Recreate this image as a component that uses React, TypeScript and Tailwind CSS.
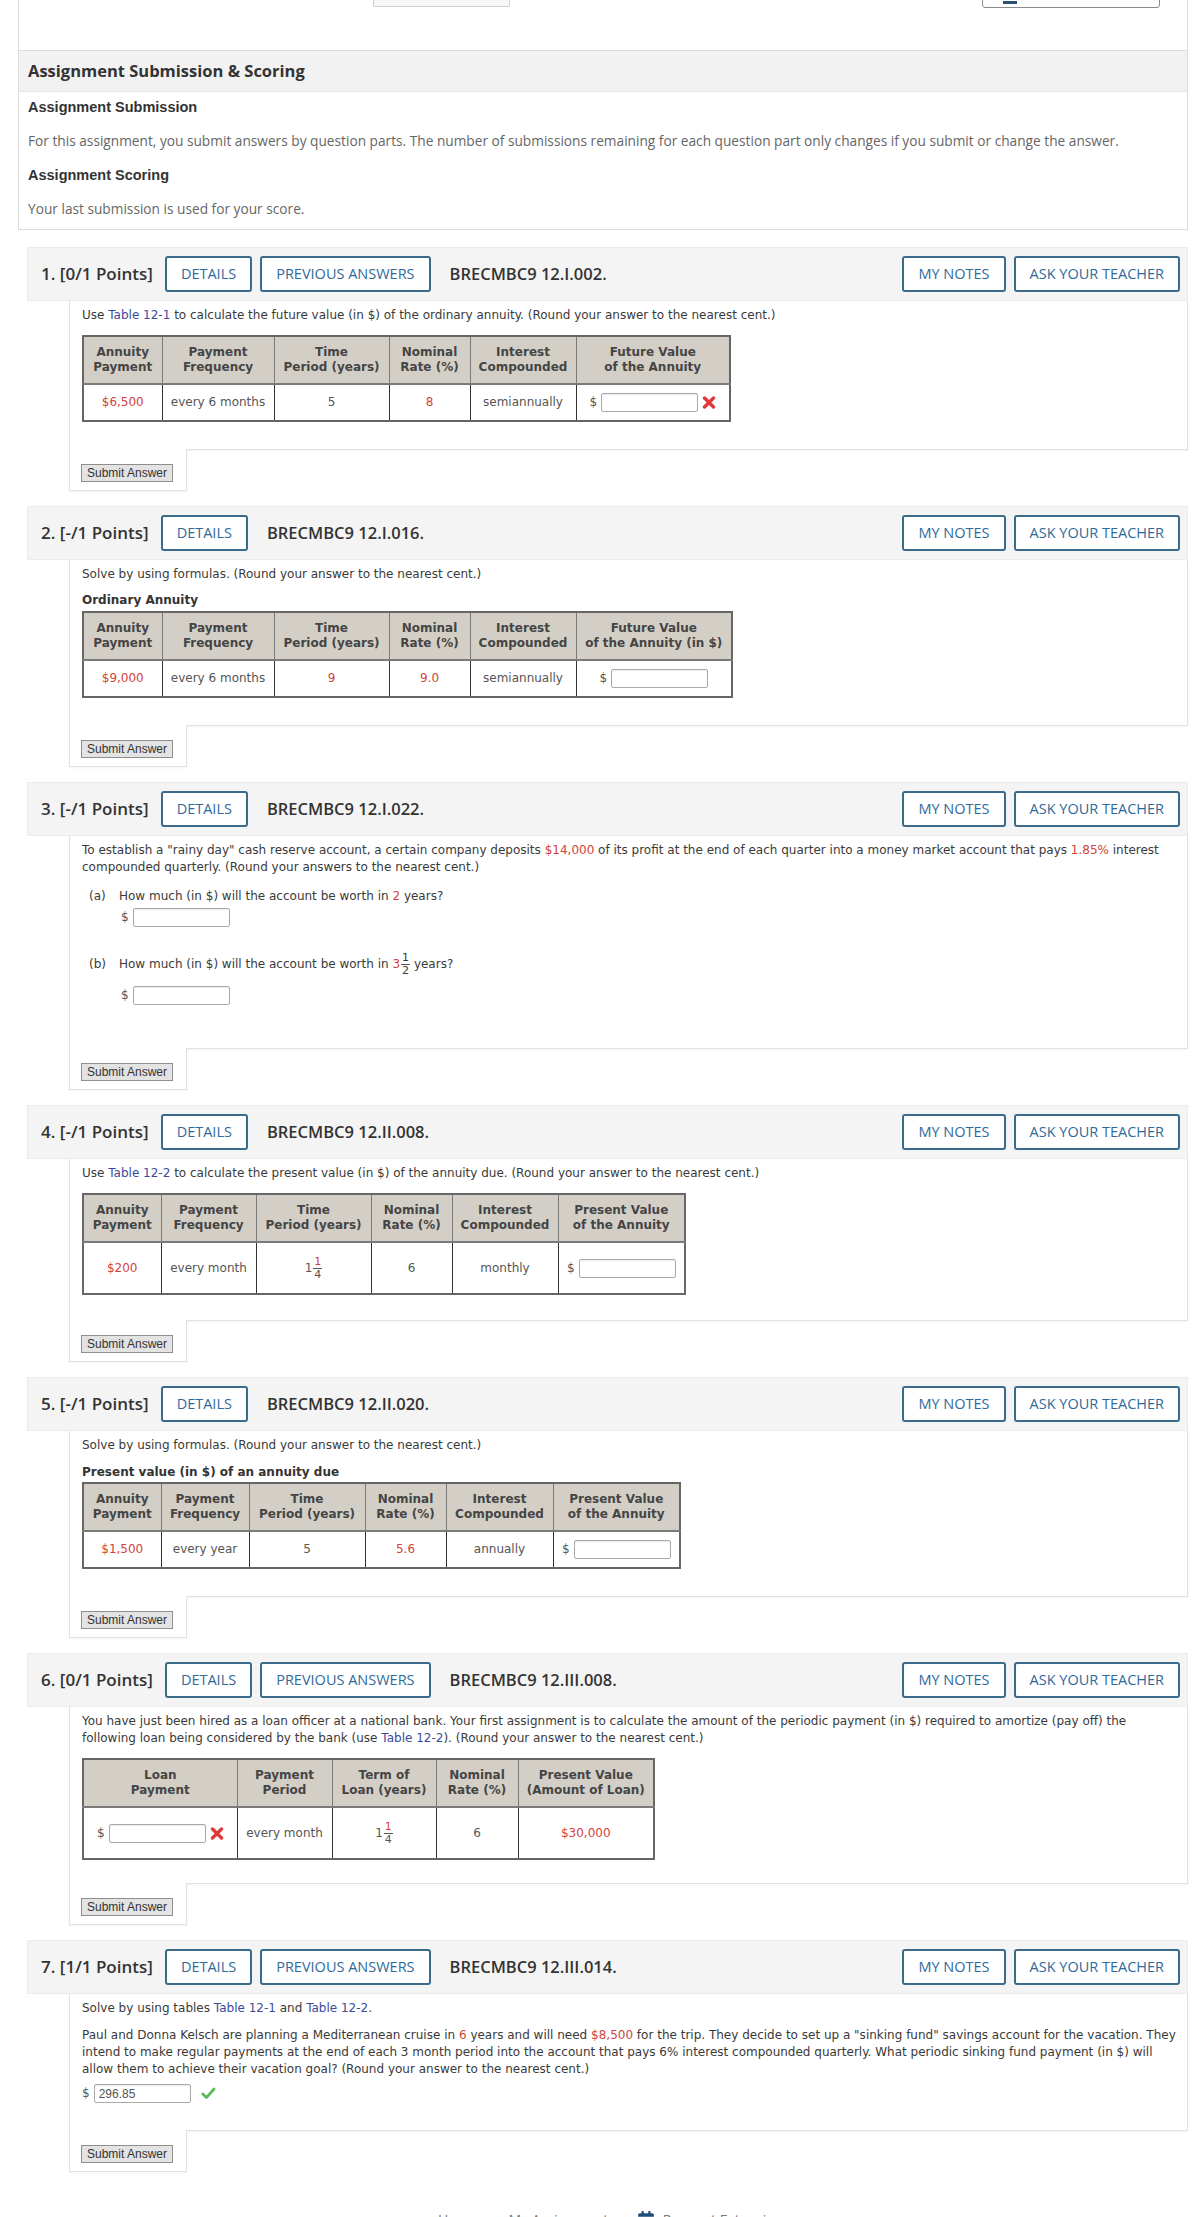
import React from 'react'
import { FaCalendarAlt } from 'react-icons/fa'

type Head = { top: string; bottom: string; w: string }

const annuityHeads = (last: Head): Head[] => [
    { top: 'Annuity', bottom: 'Payment', w: 'w-[79px]' },
    { top: 'Payment', bottom: 'Frequency', w: 'w-[112px]' },
    { top: 'Time', bottom: 'Period (years)', w: 'w-[115px]' },
    { top: 'Nominal', bottom: 'Rate (%)', w: 'w-[81px]' },
    { top: 'Interest', bottom: 'Compounded', w: 'w-[106px]' },
    last,
]

function Red({ children }: { children: React.ReactNode }) {
    return <span className="text-[#d2433b]">{children}</span>
}

function TableLink({ children }: { children: React.ReactNode }) {
    return <span className="text-[#3b4a9c]">{children}</span>
}

function Btn({ children }: { children: React.ReactNode }) {
    return (
        <span className="flex h-[36px] items-center rounded-[3px] border-2 border-[#3b6b8b] bg-white px-[14px] text-[14.5px] leading-none text-[#2f6a9b]">
            {children}
        </span>
    )
}

function XMark() {
    return (
        <svg width="14" height="13" viewBox="0 0 14 13" className="inline-block align-middle">
            <path d="M2.5 2 L11.5 11 M11.5 2 L2.5 11" stroke="#e0393a" strokeWidth="3.4" strokeLinecap="round" />
        </svg>
    )
}

function Check() {
    return (
        <svg width="15" height="13" viewBox="0 0 15 13" className="inline-block align-middle">
            <path d="M1.8 7 L5.4 10.6 L13 2" stroke="#5cb85c" strokeWidth="2.8" fill="none" strokeLinecap="round" strokeLinejoin="round" />
        </svg>
    )
}

function Input({ value }: { value?: string }) {
    return (
        <input
            readOnly
            value={value ?? ''}
            className="h-[19px] w-[97px] rounded-[2px] border border-[#a9a9a9] bg-white px-[4px] align-middle font-['Liberation_Sans',sans-serif] text-[12px] text-[#555] shadow-[inset_0_1px_1px_rgba(0,0,0,0.08)]"
        />
    )
}

function Money({ wrong, check, value }: { wrong?: boolean; check?: boolean; value?: string }) {
    return (
        <span className="inline-flex items-center gap-[4px] text-[#555]">
            <span>$</span>
            <Input value={value} />
            {wrong && <XMark />}
            {check && <span className="ml-[6px]"><Check /></span>}
        </span>
    )
}

function Frac({ whole, num, den, wholeRed, numRed }: { whole: string; num: string; den: string; wholeRed?: boolean; numRed?: boolean }) {
    return (
        <span className="inline-flex items-center align-middle">
            <span className={wholeRed ? 'text-[#d2433b]' : ''}>{whole}</span>
            <span className="ml-[1px] inline-flex flex-col items-stretch text-center text-[11px] leading-[12px]">
                <span className={numRed ? 'px-[1px] text-[#d2433b]' : 'px-[1px]'}>{num}</span>
                <span className="border-t border-[#555] px-[1px]">{den}</span>
            </span>
        </span>
    )
}

function DataTable({ heads, cells, tall }: { heads: Head[]; cells: React.ReactNode[]; tall?: boolean }) {
    return (
        <table className="border-collapse border-2 border-[#666] text-center">
            <thead>
                <tr>
                    {heads.map((h) => (
                        <th
                            key={h.top + h.bottom}
                            className={`${h.w} h-[48px] border border-b-2 border-[#7a7a7a] bg-[#d3cfc6] px-[2px] font-bold leading-[15px] text-[#454545]`}
                        >
                            {h.top}
                            <br />
                            {h.bottom}
                        </th>
                    ))}
                </tr>
            </thead>
            <tbody>
                <tr>
                    {cells.map((c, i) => (
                        <td key={i} className={`${tall ? 'h-[52px]' : 'h-[37px]'} border border-[#333] px-[4px] text-[#555]`}>
                            {c}
                        </td>
                    ))}
                </tr>
            </tbody>
        </table>
    )
}

function Question({
    n,
    pts,
    prev,
    code,
    pb,
    children,
}: {
    n: number
    pts: string
    prev?: boolean
    code: string
    pb: string
    children: React.ReactNode
}) {
    return (
        <section className="mt-[15px]">
            {/* header bar */}
            <div className="flex h-[54px] items-center border border-[#ebebeb] bg-[#f4f4f4] pl-[13px] pr-[7px] font-['Open_Sans',sans-serif]">
                <span className="text-[17px] font-semibold text-[#333]">
                    {n}. [{pts} Points]
                </span>
                <div className="ml-[12px] flex gap-[8px]">
                    <Btn>DETAILS</Btn>
                    {prev && <Btn>PREVIOUS ANSWERS</Btn>}
                </div>
                <span className="ml-[19px] text-[16.5px] font-semibold text-[#333]">{code}</span>
                <div className="ml-auto flex gap-[8px]">
                    <Btn>MY NOTES</Btn>
                    <Btn>ASK YOUR TEACHER</Btn>
                </div>
            </div>

            {/* question body */}
            <div
                className={`${pb} ml-[42px] border-x border-b border-[#e1e1e1] bg-white pl-[12px] pr-[8px] pt-[6px] font-['DejaVu_Sans',sans-serif] text-[12px] leading-[17px] text-[#3a3a3a] shadow-[0_1px_2px_rgba(0,0,0,0.05)]`}
            >
                {children}
            </div>

            {/* submit tab */}
            <div className="relative -mt-px ml-[42px] w-[118px] border-x border-b border-[#e1e1e1] bg-white pb-[7px] pl-[11px] pt-[10px] shadow-[0_1px_2px_rgba(0,0,0,0.05)]">
                <button className="h-[18px] border border-[#8e8e8e] bg-[#e3e3e3] px-[5px] font-['Liberation_Sans',sans-serif] text-[12px] leading-none text-[#333]">
                    Submit Answer
                </button>
            </div>
        </section>
    )
}

export default function App() {
    return (
        <div className="min-h-screen bg-white pl-[18px] pr-[5px]">
            {/* top of page, cut off */}
            <div className="flex h-[50px] overflow-hidden border-x border-[#dcdcdc]">
                <div className="-mt-[30px] ml-[354px] h-[37px] w-[137px] rounded-[2px] border border-[#d0d0d0] bg-[#f7f7f7]" />
                <div className="-mt-[30px] ml-auto mr-[27px] flex h-[38px] w-[178px] items-end rounded-[3px] border border-[#8a8a8a] px-[20px] pb-[3px]">
                    <span className="h-[3px] w-[14px] bg-[#2d4f73]" />
                </div>
            </div>

            {/* Assignment Submission & Scoring */}
            <div className="border border-[#dcdcdc]">
                <div className="flex h-[41px] items-center border-b border-[#e6e6e6] bg-[#f2f2f2] pl-[9px] font-['Open_Sans',sans-serif] text-[16.5px] font-bold text-[#333]">
                    Assignment Submission &amp; Scoring
                </div>
                <div className="px-[9px] pb-[11px] pt-[6px]">
                    <h3 className="font-['Liberation_Sans',sans-serif] text-[14.5px] font-bold leading-[18px] text-[#333]">Assignment Submission</h3>
                    <p className="mt-[16px] font-['Open_Sans',sans-serif] text-[13.7px] leading-[18px] text-[#666]">
                        For this assignment, you submit answers by question parts. The number of submissions remaining for each question part only changes if you submit or change the answer.
                    </p>
                    <h3 className="mt-[16px] font-['Liberation_Sans',sans-serif] text-[14.5px] font-bold leading-[18px] text-[#333]">Assignment Scoring</h3>
                    <p className="mt-[16px] font-['Open_Sans',sans-serif] text-[13.7px] leading-[18px] text-[#666]">Your last submission is used for your score.</p>
                </div>
            </div>

            <div className="pl-[9px] pt-[2px]">
                <Question n={1} pts="0/1" prev code="BRECMBC9 12.I.002." pb="pb-[27px]">
                    <p>
                        Use <TableLink>Table 12-1</TableLink> to calculate the future value (in $) of the ordinary annuity. (Round your answer to the nearest cent.)
                    </p>
                    <div className="mt-[11px]">
                        <DataTable
                            heads={annuityHeads({ top: 'Future Value', bottom: 'of the Annuity', w: 'w-[154px]' })}
                            cells={[<Red>$6,500</Red>, 'every 6 months', '5', <Red>8</Red>, 'semiannually', <Money wrong />]}
                        />
                    </div>
                </Question>

                <Question n={2} pts="-/1" code="BRECMBC9 12.I.016." pb="pb-[27px]">
                    <p>Solve by using formulas. (Round your answer to the nearest cent.)</p>
                    <p className="mt-[9px] font-bold text-[#333]">Ordinary Annuity</p>
                    <div className="mt-[2px]">
                        <DataTable
                            heads={annuityHeads({ top: 'Future Value', bottom: 'of the Annuity (in $)', w: 'w-[156px]' })}
                            cells={[<Red>$9,000</Red>, 'every 6 months', <Red>9</Red>, <Red>9.0</Red>, 'semiannually', <Money />]}
                        />
                    </div>
                </Question>

                <Question n={3} pts="-/1" code="BRECMBC9 12.I.022." pb="pb-[43px]">
                    <p>
                        To establish a "rainy day" cash reserve account, a certain company deposits <Red>$14,000</Red> of its profit at the end of each quarter into a
                        money market account that pays <Red>1.85%</Red> interest compounded quarterly. (Round your answers to the nearest cent.)
                    </p>
                    <div className="mt-[12px] flex">
                        <span className="w-[37px] pl-[7px]">(a)</span>
                        <span>
                            How much (in $) will the account be worth in <Red>2</Red> years?
                        </span>
                    </div>
                    <div className="ml-[39px] mt-[3px]">
                        <Money />
                    </div>
                    <div className="mt-[23px] flex h-[28px] items-center">
                        <span className="w-[37px] pl-[7px]">(b)</span>
                        <span className="inline-flex items-center">
                            How much (in $) will the account be worth in&nbsp;
                            <Frac whole="3" num="1" den="2" wholeRed />
                            &nbsp;years?
                        </span>
                    </div>
                    <div className="ml-[39px] mt-[8px]">
                        <Money />
                    </div>
                </Question>

                <Question n={4} pts="-/1" code="BRECMBC9 12.II.008." pb="pb-[25px]">
                    <p>
                        Use <TableLink>Table 12-2</TableLink> to calculate the present value (in $) of the annuity due. (Round your answer to the nearest cent.)
                    </p>
                    <div className="mt-[11px]">
                        <DataTable
                            tall
                            heads={[
                                { top: 'Annuity', bottom: 'Payment', w: 'w-[78px]' },
                                { top: 'Payment', bottom: 'Frequency', w: 'w-[95px]' },
                                { top: 'Time', bottom: 'Period (years)', w: 'w-[115px]' },
                                { top: 'Nominal', bottom: 'Rate (%)', w: 'w-[81px]' },
                                { top: 'Interest', bottom: 'Compounded', w: 'w-[106px]' },
                                { top: 'Present Value', bottom: 'of the Annuity', w: 'w-[127px]' },
                            ]}
                            cells={[<Red>$200</Red>, 'every month', <Frac whole="1" num="1" den="4" numRed />, '6', 'monthly', <Money />]}
                        />
                    </div>
                </Question>

                <Question n={5} pts="-/1" code="BRECMBC9 12.II.020." pb="pb-[27px]">
                    <p>Solve by using formulas. (Round your answer to the nearest cent.)</p>
                    <p className="mt-[10px] font-bold text-[#333]">Present value (in $) of an annuity due</p>
                    <div className="mt-[1px]">
                        <DataTable
                            heads={[
                                { top: 'Annuity', bottom: 'Payment', w: 'w-[78px]' },
                                { top: 'Payment', bottom: 'Frequency', w: 'w-[88px]' },
                                { top: 'Time', bottom: 'Period (years)', w: 'w-[116px]' },
                                { top: 'Nominal', bottom: 'Rate (%)', w: 'w-[81px]' },
                                { top: 'Interest', bottom: 'Compounded', w: 'w-[107px]' },
                                { top: 'Present Value', bottom: 'of the Annuity', w: 'w-[127px]' },
                            ]}
                            cells={[<Red>$1,500</Red>, 'every year', '5', <Red>5.6</Red>, 'annually', <Money />]}
                        />
                    </div>
                </Question>

                <Question n={6} pts="0/1" prev code="BRECMBC9 12.III.008." pb="pb-[23px]">
                    <p>
                        You have just been hired as a loan officer at a national bank. Your first assignment is to calculate the amount of the periodic payment (in $) required
                        to amortize (pay off) the following loan being considered by the bank (use <TableLink>Table 12-2</TableLink>). (Round your answer to the nearest cent.)
                    </p>
                    <div className="mt-[11px]">
                        <DataTable
                            tall
                            heads={[
                                { top: 'Loan', bottom: 'Payment', w: 'w-[154px]' },
                                { top: 'Payment', bottom: 'Period', w: 'w-[95px]' },
                                { top: 'Term of', bottom: 'Loan (years)', w: 'w-[104px]' },
                                { top: 'Nominal', bottom: 'Rate (%)', w: 'w-[82px]' },
                                { top: 'Present Value', bottom: '(Amount of Loan)', w: 'w-[136px]' },
                            ]}
                            cells={[<Money wrong />, 'every month', <Frac whole="1" num="1" den="4" numRed />, '6', <Red>$30,000</Red>]}
                        />
                    </div>
                </Question>

                <Question n={7} pts="1/1" prev code="BRECMBC9 12.III.014." pb="pb-[27px]">
                    <p>
                        Solve by using tables <TableLink>Table 12-1</TableLink> and <TableLink>Table 12-2</TableLink>.
                    </p>
                    <p className="mt-[10px]">
                        Paul and Donna Kelsch are planning a Mediterranean cruise in <Red>6</Red> years and will need <Red>$8,500</Red> for the trip. They decide to set up a
                        "sinking fund" savings account for the vacation. They intend to make regular payments at the end of each 3 month period into the account that pays 6%
                        interest compounded quarterly. What periodic sinking fund payment (in $) will allow them to achieve their vacation goal? (Round your answer to the
                        nearest cent.)
                    </p>
                    <div className="mt-[6px]">
                        <Money value="296.85" check />
                    </div>
                </Question>
            </div>

            {/* footer links, cut off at bottom */}
            <div className="ml-[420px] mt-[37px] flex items-center font-['Open_Sans',sans-serif] text-[14px] text-[#777]">
                <span>Home</span>
                <span className="ml-[31px]">My Assignments</span>
                <FaCalendarAlt className="ml-[22px] text-[#1f4e79]" size={18} />
                <span className="ml-[8px]">Request Extension</span>
            </div>
        </div>
    )
}
